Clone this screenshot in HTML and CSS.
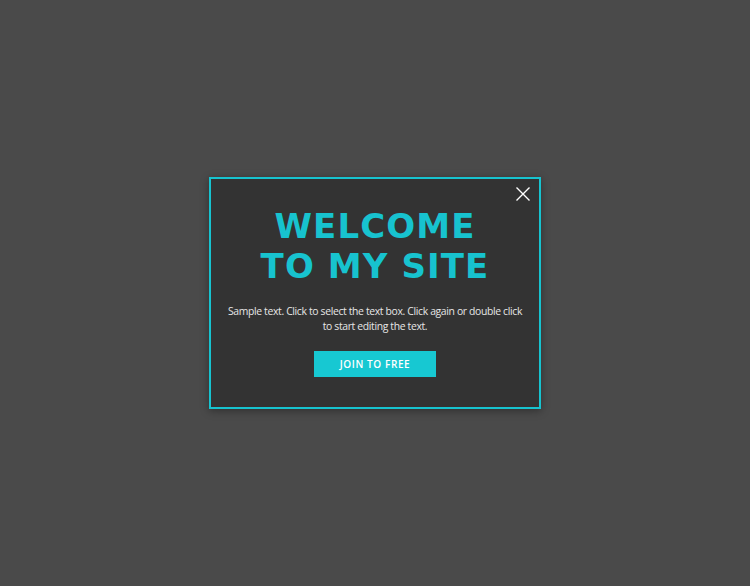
FILE: index.html
```html
<!DOCTYPE html>
<html>
<head>
<meta charset="utf-8">
<link rel="stylesheet" href="styles.css">
</head>
<body>
<div class="page">
  <div class="popup">
    <button class="close" aria-label="Close">
      <svg width="16" height="16" viewBox="0 0 16 16"><path d="M1.5 1.5 L14.5 14.5 M14.5 1.5 L1.5 14.5" stroke="#ffffff" stroke-width="1.4" fill="none"/></svg>
    </button>
    <h1 class="title">WELCOME<br>TO MY SITE</h1>
    <p class="text">Sample text. Click to select the text box. Click again or double click to start editing the text.</p>
    <a class="btn" href="#">JOIN TO FREE</a>
  </div>
</div>
</body>
</html>
```
FILE: styles.css
```css
html, body {
  margin: 0;
  padding: 0;
  height: 100%;
}
body {
  background: #4a4a4a;
  font-family: "Open Sans", "Liberation Sans", sans-serif;
}
.page {
  height: 586px;
  display: flex;
  align-items: center;
  justify-content: center;
}
.popup {
  position: relative;
  width: 332px;
  height: 232px;
  box-sizing: border-box;
  background: #333333;
  border: 2px solid #17c3cf;
  box-shadow: 0 2px 8px rgba(0,0,0,0.35);
  display: flex;
  flex-direction: column;
  align-items: center;
  padding-top: 27px;
}
.close {
  position: absolute;
  top: 7px;
  right: 8px;
  width: 16px;
  height: 16px;
  padding: 0;
  border: 0;
  background: none;
  display: flex;
}
.title {
  margin: 0;
  font-family: "DejaVu Sans", sans-serif;
  font-weight: bold;
  font-size: 34px;
  line-height: 40px;
  letter-spacing: 1.1px;
  color: #17c3cf;
  text-align: center;
}
.text {
  margin: 18px 0 0;
  width: 302px;
  font-size: 10.4px;
  line-height: 14.5px;
  letter-spacing: -0.35px;
  color: #e6e6e6;
  text-align: center;
}
.btn {
  margin-top: 18px;
  width: 122px;
  height: 26px;
  background: #17c8d2;
  color: #ffffff;
  font-size: 10px;
  font-weight: 600;
  letter-spacing: 0.6px;
  text-decoration: none;
  display: flex;
  align-items: center;
  justify-content: center;
}
```
